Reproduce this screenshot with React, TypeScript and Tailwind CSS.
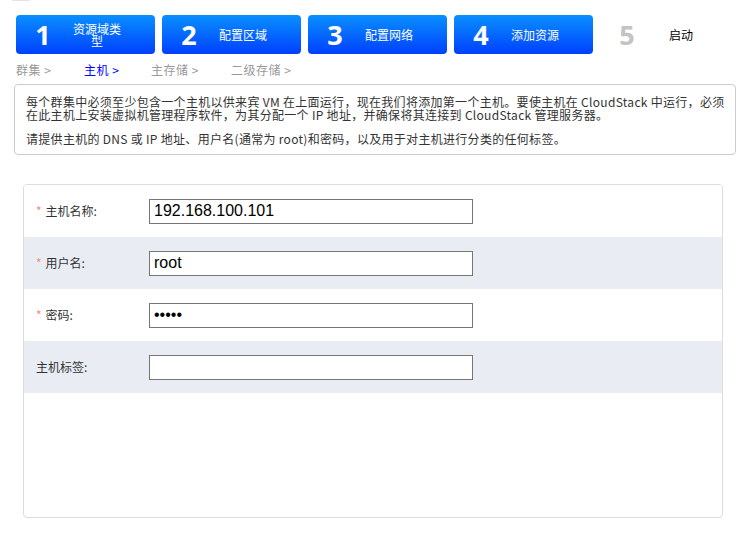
import React from "react";

const CJK = '"Noto Sans CJK SC", "Noto Sans", sans-serif';

function Step({ n, label, active }: { n: string; label: string; active: boolean }) {
  return (
    <div
      className={
        active
          ? "flex h-[39px] w-[139px] items-center rounded-[4px] bg-[linear-gradient(to_bottom,#0a90ff,#0040ff)]"
          : "flex h-[39px] w-[139px] items-center"
      }
    >
      <span
        className={
          active
            ? "ml-[12px] w-[30px] text-center text-[27px] font-bold leading-none text-white"
            : "ml-[12px] w-[30px] text-center text-[27px] font-bold leading-none text-[#c4c4c4]"
        }
        style={{ fontFamily: '"Open Sans", "Noto Sans", sans-serif' }}
      >
        {n}
      </span>
      <span
        className={
          active
            ? "ml-[13px] w-[52px] text-center text-[12px] leading-[12px] text-white"
            : "ml-[13px] w-[52px] text-center text-[12px] leading-[12px] text-black"
        }
      >
        {label}
      </span>
    </div>
  );
}

function Row({
  label,
  required,
  value,
  type,
  shaded,
}: {
  label: string;
  required: boolean;
  value: string;
  type: string;
  shaded: boolean;
}) {
  return (
    <div className={shaded ? "flex h-[52px] items-center bg-[#e9ecf3]" : "flex h-[52px] items-center bg-white"}>
      <div className="flex w-[125px] items-center pl-[12px] text-[12px] text-[#333]">
        {required && <span className="mr-[4px] text-[#f28b82]">*</span>}
        <span>{label}</span>
      </div>
      <input
        type={type}
        defaultValue={value}
        readOnly
        className="h-[25px] w-[324px] border border-[#767676] bg-white px-[4px] text-[16px] text-black outline-none"
        style={{ fontFamily: '"Liberation Sans", Arial, sans-serif' }}
      />
    </div>
  );
}

export default function App() {
  return (
    <div className="relative h-[534px] w-[748px] overflow-hidden bg-white" style={{ fontFamily: CJK }}>
      <div className="absolute left-[12px] top-0 h-[1px] w-[18px] bg-[#e4e4e4]" />
      <div className="flex gap-[7px] pl-[16px] pt-[15px]">
        <Step n="1" label="资源域类型" active />
        <Step n="2" label="配置区域" active />
        <Step n="3" label="配置网络" active />
        <Step n="4" label="添加资源" active />
        <Step n="5" label="启动" active={false} />
      </div>
      <div className="mt-[8px] flex pl-[16px] text-[12px] leading-[16px] text-[#999]">
        <span className="w-[68px] tracking-[0.5px]">群集 &gt;</span>
        <span className="w-[67px] tracking-[0.5px] text-[#0000ff]">主机 &gt;</span>
        <span className="w-[80px] tracking-[0.5px]">主存储 &gt;</span>
        <span className="tracking-[0.5px]">二级存储 &gt;</span>
      </div>
      <div className="ml-[14px] mt-[6px] h-[71px] w-[722px] rounded-[4px] border border-[#cccccc] px-[11px] pt-[10px] text-[12px] tracking-[0.3px] text-[#333]">
        <p className="whitespace-nowrap leading-[13px]">
          每个群集中必须至少包含一个主机以供来宾 VM 在上面运行，现在我们将添加第一个主机。要使主机在 CloudStack 中运行，必须
          <br />
          在此主机上安装虚拟机管理程序软件，为其分配一个 IP 地址，并确保将其连接到 CloudStack 管理服务器。
        </p>
        <p className="mt-[11px] whitespace-nowrap leading-[13px]">
          请提供主机的 DNS 或 IP 地址、用户名(通常为 root)和密码，以及用于对主机进行分类的任何标签。
        </p>
      </div>
      <div className="ml-[23px] mt-[29px] h-[334px] w-[700px] overflow-hidden rounded-[4px] border border-[#dddddd]">
        <Row label="主机名称:" required value="192.168.100.101" type="text" shaded={false} />
        <Row label="用户名:" required value="root" type="text" shaded />
        <Row label="密码:" required value="12345" type="password" shaded={false} />
        <Row label="主机标签:" required={false} value="" type="text" shaded />
      </div>
    </div>
  );
}
